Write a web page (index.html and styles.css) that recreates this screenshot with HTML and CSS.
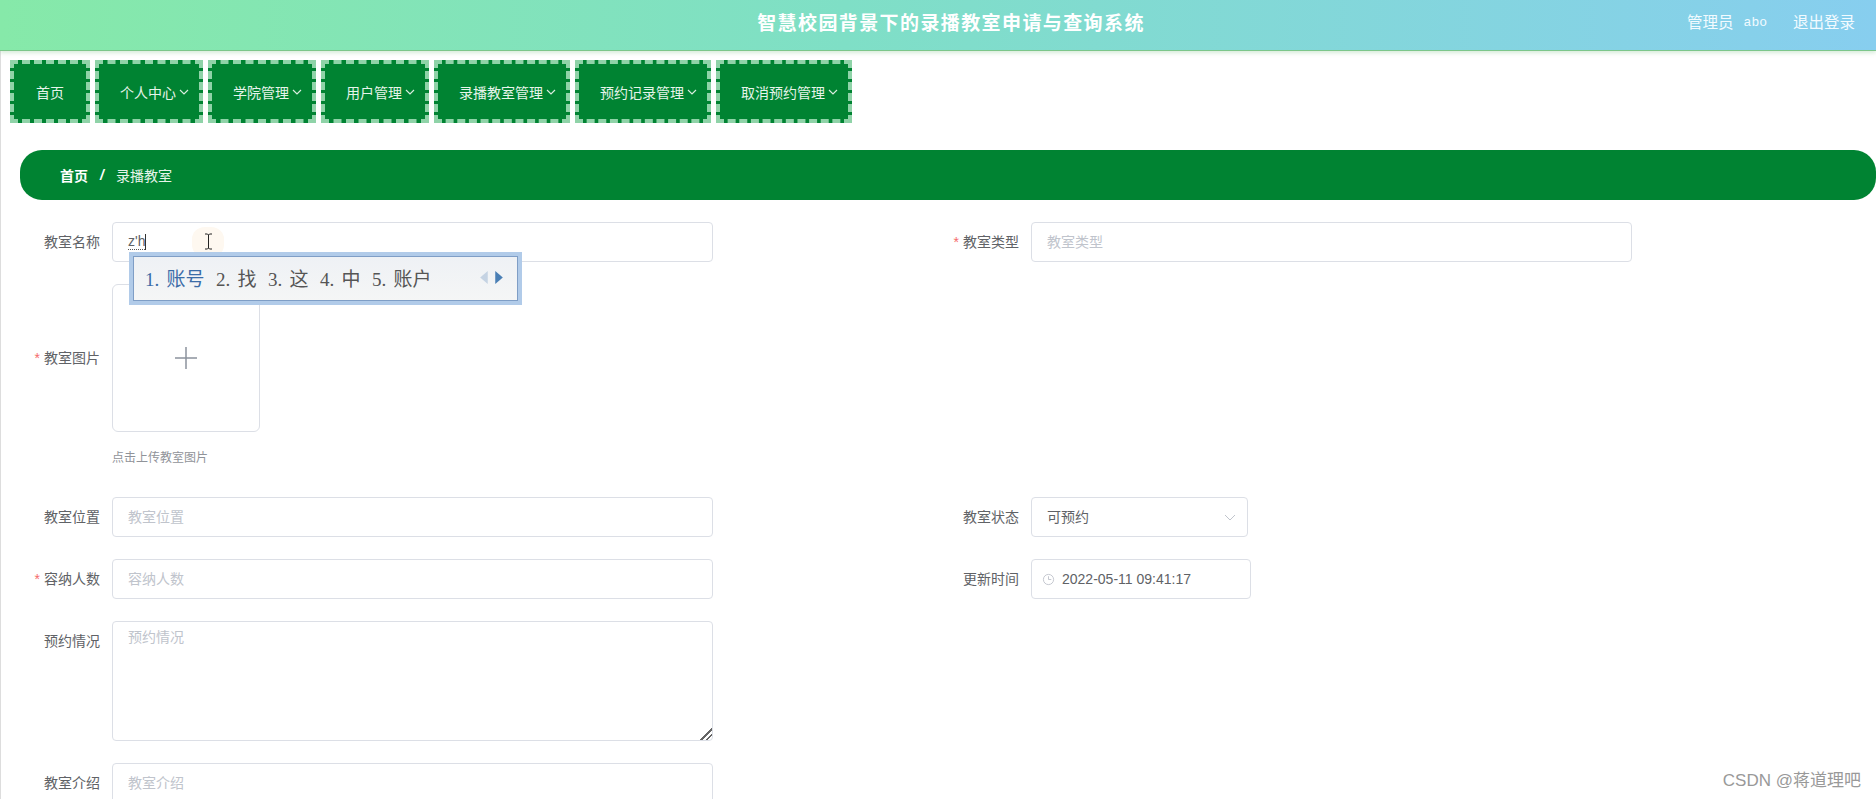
FILE: index.html
```html
<!DOCTYPE html>
<html lang="zh-CN">
<head>
    <meta charset="UTF-8">
    <meta name="viewport" content="width=device-width, initial-scale=1.0">
    <title>智慧校园背景下的录播教室申请与查询系统</title>
    <link rel="stylesheet" href="styles.css">
</head>
<body>
    <header class="topbar">
        <div class="topbar-title">智慧校园背景下的录播教室申请与查询系统</div>
        <div class="topbar-user">
            <span class="user-role">管理员</span>
            <span class="user-name">abo</span>
            <span class="logout">退出登录</span>
        </div>
    </header>

    <div class="page">
        <nav class="menu">
            <div class="menu-item menu-home">首页</div>
            <div class="menu-item">个人中心<svg class="menu-arrow" viewBox="0 0 10 6"><path d="M1 1l4 4 4-4"/></svg></div>
            <div class="menu-item">学院管理<svg class="menu-arrow" viewBox="0 0 10 6"><path d="M1 1l4 4 4-4"/></svg></div>
            <div class="menu-item">用户管理<svg class="menu-arrow" viewBox="0 0 10 6"><path d="M1 1l4 4 4-4"/></svg></div>
            <div class="menu-item">录播教室管理<svg class="menu-arrow" viewBox="0 0 10 6"><path d="M1 1l4 4 4-4"/></svg></div>
            <div class="menu-item">预约记录管理<svg class="menu-arrow" viewBox="0 0 10 6"><path d="M1 1l4 4 4-4"/></svg></div>
            <div class="menu-item">取消预约管理<svg class="menu-arrow" viewBox="0 0 10 6"><path d="M1 1l4 4 4-4"/></svg></div>
        </nav>

        <div class="breadcrumb">
            <strong>首页</strong>
            <span class="breadcrumb-sep">/</span>
            <span>录播教室</span>
        </div>

        <form class="form">
            <div class="form-item">
                <label class="form-label">教室名称</label>
                <div class="input input-composing"><span class="composing">z'h</span><span class="caret"></span></div>
            </div>
            <div class="form-item">
                <label class="form-label required">教室类型</label>
                <input class="input" placeholder="教室类型">
            </div>

            <div class="form-item form-item-wide">
                <label class="form-label form-label-upload required">教室图片</label>
                <div class="upload">
                    <div class="upload-card">
                        <svg class="upload-plus" viewBox="0 0 24 24"><path d="M12 1v22M1 12h22"/></svg>
                    </div>
                    <div class="upload-tip">点击上传教室图片</div>
                </div>
            </div>

            <div class="form-item">
                <label class="form-label">教室位置</label>
                <input class="input" placeholder="教室位置">
            </div>
            <div class="form-item">
                <label class="form-label">教室状态</label>
                <div class="input select">
                    <span>可预约</span>
                    <svg class="select-arrow" viewBox="0 0 12 7"><path d="M1 1l5 5 5-5"/></svg>
                </div>
            </div>

            <div class="form-item">
                <label class="form-label required">容纳人数</label>
                <input class="input" placeholder="容纳人数">
            </div>
            <div class="form-item">
                <label class="form-label">更新时间</label>
                <div class="input date">
                    <svg class="date-icon" viewBox="0 0 14 14"><circle cx="7" cy="7" r="5.5"/><path d="M7 3.5V7h3"/></svg>
                    <span>2022-05-11 09:41:17</span>
                </div>
            </div>

            <div class="form-item form-item-wide">
                <label class="form-label">预约情况</label>
                <textarea class="input textarea" placeholder="预约情况"></textarea>
            </div>

            <div class="form-item form-item-wide">
                <label class="form-label">教室介绍</label>
                <input class="input" placeholder="教室介绍">
            </div>
        </form>
    </div>

    <!-- things floating over the form -->
    <div class="cursor-halo"></div>
    <svg class="cursor-beam" viewBox="0 0 9 17"><path d="M1 1h2.5l1 1 1-1H8M4.500 2v13M1 16h2.500l1-1 1 1H8"/></svg>

    <div class="ime">
        <span class="ime-item ime-active"><span class="ime-num">1.</span>账号</span>
        <span class="ime-item"><span class="ime-num">2.</span>找</span>
        <span class="ime-item"><span class="ime-num">3.</span>这</span>
        <span class="ime-item"><span class="ime-num">4.</span>中</span>
        <span class="ime-item"><span class="ime-num">5.</span>账户</span>
        <div class="ime-pager">
            <svg viewBox="0 0 8 12"><path class="ime-prev" d="M7 0v12L0 6z"/></svg>
            <svg viewBox="0 0 8 12"><path class="ime-next" d="M1 0v12l7-6z"/></svg>
        </div>
    </div>

    <div class="watermark">CSDN @蒋道理吧</div>
</body>
</html>
```

FILE: styles.css
```css
* {
    box-sizing: border-box;
}

html,
body {
    height: 799px;
    overflow: hidden;
}

body {
    margin: 0;
    background-color: #fff;
    color: #606266;
    font-family: "Liberation Sans", "Noto Sans CJK SC", sans-serif;
    font-size: 14px;
}

.topbar {
    display: flex;
    justify-content: center;
    align-items: center;
    position: relative;
    height: 51px;
    padding-bottom: 3px;
    background: linear-gradient(90deg, #86e9a9 0%, #7fdfc6 45%, #87ceef 100%);
    border-bottom: 1px solid #7cc68a;
    box-shadow: 0 2px 4px rgba(120, 190, 130, 0.3);
    color: #fff;
}

.topbar-title {
    font-family: "Liberation Serif", "Noto Sans CJK SC", serif;
    font-size: 19px;
    font-weight: 700;
    letter-spacing: 1.4px;
    line-height: 40px;
    margin-left: 26px;
}

.topbar-user {
    display: flex;
    align-items: center;
    position: absolute;
    top: 0;
    right: 21px;
    height: 41px;
    font-size: 15.500px;
    color: #f2fbff;
}

.user-name {
    margin: 3px 0 0 10px;
    font-family: "Liberation Mono", monospace;
    font-size: 13px;
}

.logout {
    margin-left: 26px;
}

.page {
    height: 748px;
    border-left: 1px solid #ddd;
}

.menu {
    display: flex;
    gap: 5px;
    padding: 9px 0 0 9px;
}

.menu-item {
    display: flex;
    align-items: center;
    height: 63px;
    padding: 0 10px 0 21px;
    background-color: #008332;
    border: 4px dashed #8fd3a8;
    color: #e6f4ea;
    white-space: nowrap;
}

.menu-home {
    padding: 0 22px;
}

.menu-arrow {
    width: 10px;
    height: 6px;
    margin-left: 3px;
    fill: none;
    stroke: #d8ecde;
    stroke-width: 1.2;
}

.breadcrumb {
    display: flex;
    align-items: center;
    height: 50px;
    margin: 27px 0 0 19px;
    padding-left: 40px;
    background-color: #008332;
    border-radius: 22px;
    color: #e6f4ea;
}

.breadcrumb strong {
    color: #fff;
}

.breadcrumb-sep {
    margin: 0 12px;
    font-weight: 700;
    font-style: italic;
    color: #fff;
}

.form {
    display: grid;
    grid-template-columns: 919px 1fr;
    row-gap: 22px;
    margin-top: 22px;
    padding-left: 19px;
}

.form-item {
    display: flex;
}

.form-item-wide {
    grid-column: 1 / -1;
}

.form-label {
    flex: none;
    width: 92px;
    padding-right: 12px;
    line-height: 40px;
    text-align: right;
}

.form-label-upload {
    line-height: 148px;
}

.required::before {
    content: "*";
    margin-right: 4px;
    color: #f56c6c;
}

.input {
    display: block;
    width: 601px;
    height: 40px;
    padding: 0 15px;
    background-color: #fff;
    border: 1px solid #dcdfe6;
    border-radius: 4px;
    color: #606266;
    font-family: inherit;
    font-size: 14px;
    line-height: 38px;
    outline: none;
}

.input::placeholder {
    color: #c0c4cc;
    opacity: 1;
}

.input-composing {
    display: flex;
    align-items: center;
}

.composing {
    border-bottom: 1px dotted #555;
    line-height: 15px;
}

.caret {
    width: 1px;
    height: 16px;
    background-color: #333;
}

.upload-card {
    display: flex;
    justify-content: center;
    align-items: center;
    width: 148px;
    height: 148px;
    border: 1px solid #dcdfe6;
    border-radius: 6px;
}

.upload-plus {
    width: 24px;
    height: 24px;
    fill: none;
    stroke: #8c939d;
    stroke-width: 1.500;
}

.upload-tip {
    margin-top: 18px;
    color: #909399;
    font-size: 12px;
    line-height: 17px;
    padding-bottom: 8px;
}

.select {
    display: flex;
    justify-content: space-between;
    align-items: center;
    width: 217px;
    padding-right: 11px;
}

.select-arrow {
    width: 12px;
    height: 7px;
    fill: none;
    stroke: #c0c4cc;
    stroke-width: 1;
}

.date {
    display: flex;
    align-items: center;
    gap: 7px;
    width: 220px;
    padding-left: 10px;
}

.date-icon {
    width: 13px;
    height: 13px;
    fill: none;
    stroke: #c0c4cc;
    stroke-width: 1;
}

.textarea {
    height: 120px;
    padding: 5px 15px;
    line-height: 21px;
}

.textarea::-webkit-resizer {
    background: linear-gradient(135deg, transparent 60%, #666 60%, #666 67%, transparent 67%, transparent 78%, #666 78%, #666 85%, transparent 85%);
}

.cursor-halo {
    position: absolute;
    left: 192px;
    top: 227px;
    width: 32px;
    height: 30px;
    border-radius: 40%;
    background-color: #fef8f0;
}

.cursor-beam {
    position: absolute;
    left: 204px;
    top: 233px;
    width: 9px;
    height: 17px;
    fill: none;
    stroke: #222;
    stroke-width: 1;
}

.ime {
    display: flex;
    align-items: center;
    gap: 11.500px;
    position: absolute;
    left: 129px;
    top: 252px;
    width: 393px;
    height: 53px;
    padding: 0 15px 2px 12px;
    background: linear-gradient(180deg, #eef1f5 0%, #f5f6f6 100%);
    border: 4px solid #b1cbe9;
    box-shadow: inset 0 0 0 1px #7f9ec6;
    color: #555;
    font-family: "Liberation Serif", "Noto Sans CJK SC", serif;
    font-size: 19px;
}

.ime-num {
    display: inline-block;
    width: 21.500px;
}

.ime-active {
    color: #3b6ca8;
}

.ime-pager {
    display: flex;
    gap: 5px;
    margin-left: auto;
}

.ime-pager svg {
    display: block;
    width: 9px;
    height: 13px;
}

.ime-prev {
    fill: #c5d3e3;
}

.ime-next {
    fill: #4a7fb5;
}

.watermark {
    position: absolute;
    right: 15px;
    top: 769px;
    color: #999;
    font-size: 17px;
    line-height: 24px;
    white-space: nowrap;
}
```
